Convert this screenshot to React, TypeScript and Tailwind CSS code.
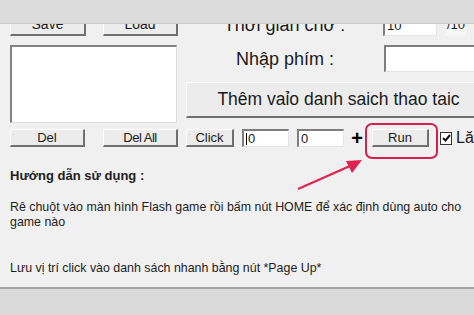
import type { ReactNode } from "react";

const font = { fontFamily: '"Liberation Sans", Arial, sans-serif' };

function WinButton({
  children,
  className = "",
}: {
  children: ReactNode;
  className?: string;
}) {
  return (
    <div
      className={`flex items-center justify-center border-t border-l border-r-2 border-b-2 border-t-white border-l-white border-r-[#6f6f6f] border-b-[#6f6f6f] bg-[#ececec] text-[#1a1a1a] ${className}`}
    >
      {children}
    </div>
  );
}

function WinInput({
  children,
  className = "",
}: {
  children?: ReactNode;
  className?: string;
}) {
  return (
    <div
      className={`flex items-center border-t-2 border-l-2 border-r border-b border-t-[#7d7d7d] border-l-[#7d7d7d] border-r-[#e4e4e4] border-b-[#e4e4e4] bg-white pl-[2px] text-[13px] leading-none text-[#1a1a1a] ${className}`}
    >
      {children}
    </div>
  );
}

export default function App() {
  return (
    <div
      className="relative flex h-[315px] w-[474px] flex-col overflow-hidden bg-[#f0f0f0]"
      style={font}
    >
      <div className="relative z-10 h-[24px] shrink-0 border-b border-[#c9c9c9] bg-[#dcdcdc]" />

      <div className="min-h-0 flex-1 overflow-hidden">
        <div className="-mt-[11px] flex pl-[10px]">
          {/* left column */}
          <div className="flex w-[168px] shrink-0 flex-col">
            <div className="flex h-[23px] justify-between">
              <WinButton className="w-[76px] text-[14px]">Save</WinButton>
              <WinButton className="w-[75px] text-[14px]">Load</WinButton>
            </div>
            <div className="mt-[9px] h-[78px] w-[167px] border-t-2 border-l-2 border-r border-b border-t-[#828282] border-l-[#828282] border-r-[#dcdcdc] border-b-[#dcdcdc] bg-white" />
            <div className="mt-[6px] flex h-[18px] justify-between">
              <WinButton className="w-[75px] text-[13px]">Del</WinButton>
              <WinButton className="w-[75px] text-[13px] tracking-[-0.5px]">
                Del All
              </WinButton>
            </div>
          </div>

          {/* right column */}
          <div className="ml-[8px] flex w-[306px] shrink-0 flex-col">
            <div className="flex h-[23px] items-center">
              <div className="w-[197px] text-center text-[18px] leading-none text-[#1a1a1a]">
                Thời gian chờ :
              </div>
              <WinInput className="h-full w-[54px]">10</WinInput>
              <div className="ml-[8px] flex h-full items-center bg-[#f7f7f7] pl-[2px] text-[13px] text-[#1a1a1a]">
                /10
              </div>
            </div>
            <div className="mt-[9px] flex h-[27px] items-center">
              <div className="w-[198px] text-center text-[18px] leading-none text-[#1a1a1a]">
                Nhập phím :
              </div>
              <WinInput className="h-full w-[100px]" />
            </div>
            <WinButton className="mt-[10px] h-[36px] w-full text-[17.5px]">
              Thêm vaỉo danh saich thao taic
            </WinButton>
            <div className="mt-[11px] flex h-[18px] items-center">
              <WinButton className="h-full w-[48px] text-[13px]">Click</WinButton>
              <WinInput className="ml-[8px] h-full w-[47px]">
                <span className="mr-[1px] h-[12px] w-[1px] bg-black" />0
              </WinInput>
              <WinInput className="ml-[8px] h-full w-[47px]">0</WinInput>
              <div className="ml-[7px] w-[12px] text-center text-[20px] font-bold leading-none text-black">
                +
              </div>
              <WinButton className="ml-[9px] h-full w-[57px] text-[13px]">Run</WinButton>
              <div className="ml-[11px] flex h-[13px] w-[12px] items-center justify-center border border-[#333] bg-white">
                <svg width="9" height="8" viewBox="0 0 9 8">
                  <path d="M1 4 L3.5 6.5 L8 1" fill="none" stroke="#111" strokeWidth="2" />
                </svg>
              </div>
              <div className="ml-[4px] text-[16px] text-[#1a1a1a]">Lă</div>
            </div>
          </div>
        </div>

        <div className="px-[10px] text-[12.4px] text-[#1e1e1e]">
          <div className="mt-[22px] text-[13px] font-bold leading-[14px]">
            Hướng dẫn sử dụng :
          </div>
          <p className="mt-[17px] w-[462px] leading-[15px]">
            Rê chuột vào màn hình Flash game rồi bấm nút HOME để xác định dùng auto cho game nào
          </p>
          <p className="mt-[31px] leading-[15px]">
            Lưu vị trí click vào danh sách nhanh bằng nút *Page Up*
          </p>
        </div>
      </div>

      <div className="h-[28px] shrink-0 border-t-2 border-[#a3a3a3] bg-[#dadada]" />

      {/* highlight + arrow overlay */}
      <div className="pointer-events-none absolute left-[365px] top-[123px] h-[36px] w-[73px] rounded-[7px] border-2 border-[#d3204c]" />
      <svg
        className="pointer-events-none absolute left-0 top-0"
        width="474"
        height="315"
        viewBox="0 0 474 315"
      >
        <line x1="298" y1="189" x2="350" y2="166" stroke="#e02250" strokeWidth="2" />
        <polygon points="362,160 346,161 352,173" fill="#e02250" />
      </svg>
    </div>
  );
}
